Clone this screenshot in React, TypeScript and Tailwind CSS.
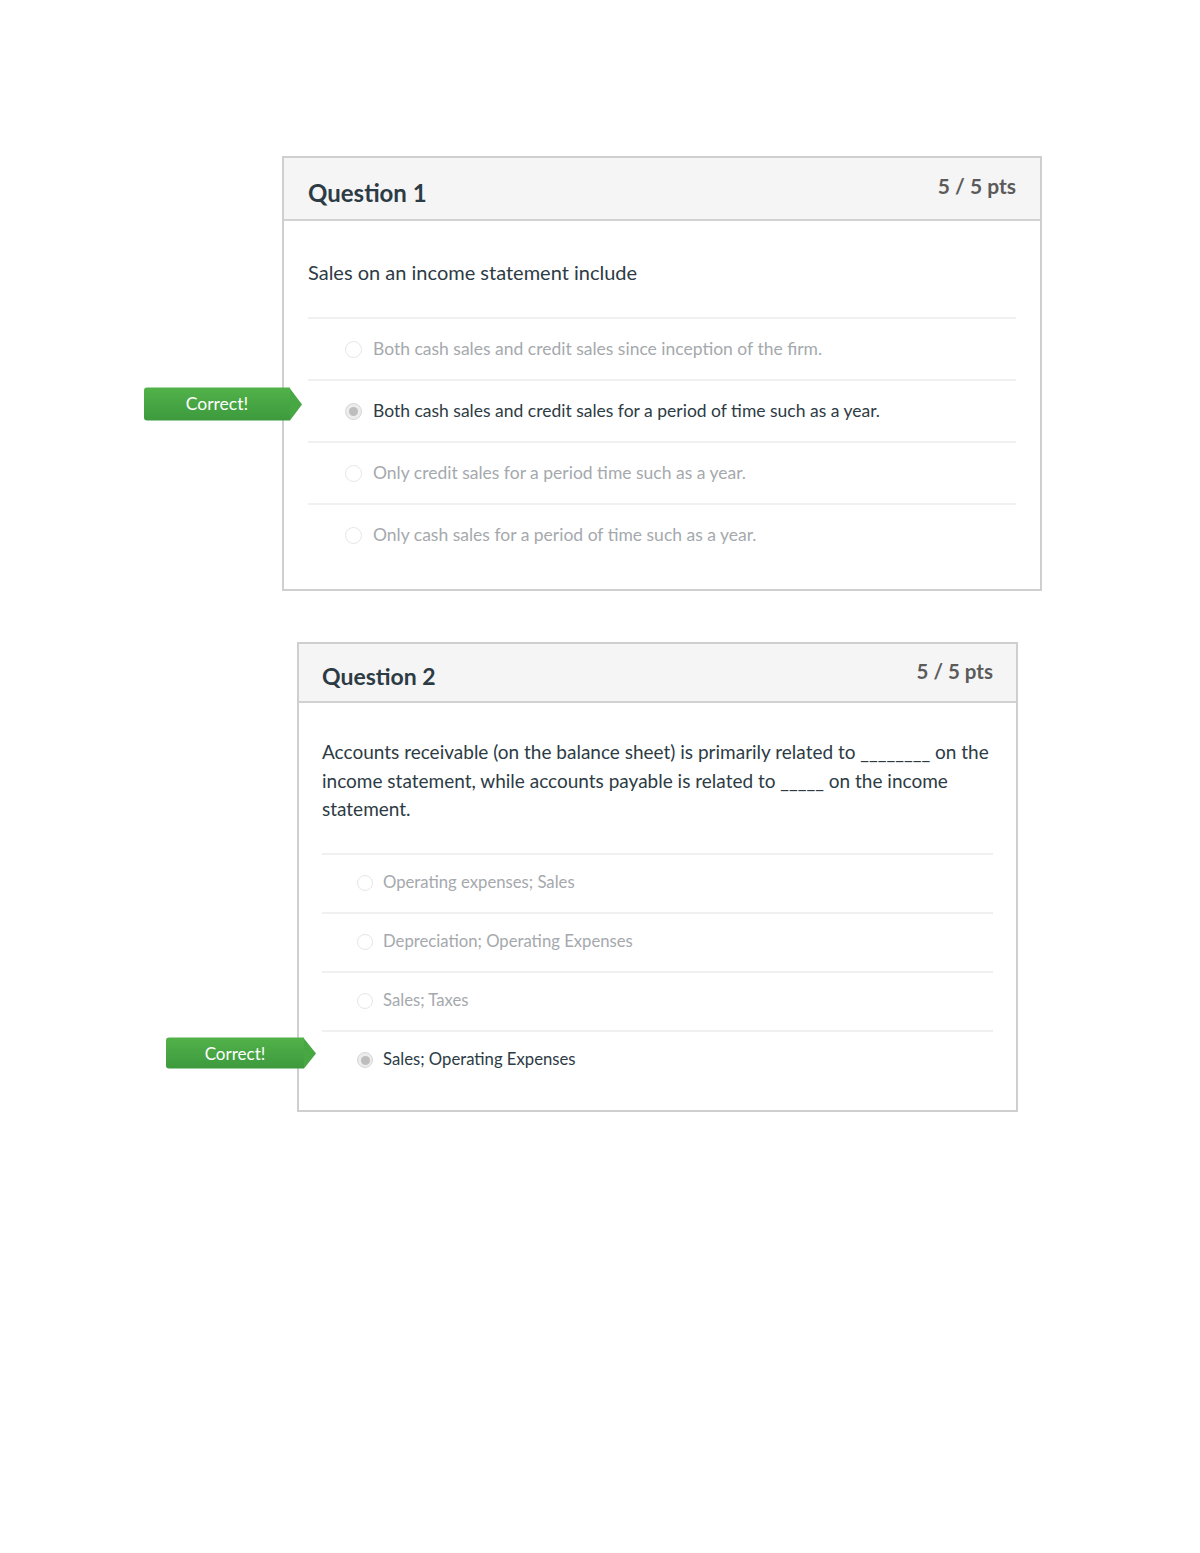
import React from "react";

type Answer = { text: string; selected?: boolean };

interface QuestionCardProps {
  title: string;
  points: string;
  question: string;
  answers: Answer[];
  compact?: boolean;
}

const Radio = ({ selected, size }: { selected?: boolean; size: string }) =>
  selected ? (
    <span className={`${size} shrink-0 rounded-full border border-[#d6d6d6] bg-[#ececec] flex items-center justify-center`}>
      <span className="w-[9px] h-[9px] rounded-full bg-[#bdbdbd]" />
    </span>
  ) : (
    <span className={`${size} shrink-0 rounded-full border border-[#e6e6e6] bg-white`} />
  );

const CorrectBadge = ({ compact }: { compact?: boolean }) => (
  <div
    className={
      compact
        ? "absolute left-[-156px] top-[calc(50%-7px)] -translate-y-1/2 flex items-center"
        : "absolute left-[-164px] top-[calc(50%-7px)] -translate-y-1/2 flex items-center"
    }
  >
    <div
      className={
        compact
          ? "w-[138px] h-[31px] rounded-l-[3px] bg-gradient-to-b from-[#52b249] to-[#3c9a3e] flex items-center justify-center text-white text-[17px]"
          : "w-[146px] h-[33px] rounded-l-[3px] bg-gradient-to-b from-[#52b249] to-[#3c9a3e] flex items-center justify-center text-white text-[17.5px]"
      }
    >
      Correct!
    </div>
    <div
      className={
        compact
          ? "w-0 h-0 border-y-[15.5px] border-y-transparent border-l-[12px] border-l-[#47a743]"
          : "w-0 h-0 border-y-[16.5px] border-y-transparent border-l-[12px] border-l-[#47a743]"
      }
    />
  </div>
);

const QuestionCard = ({ title, points, question, answers, compact }: QuestionCardProps) => (
  <div
    className={
      compact
        ? "ml-[297px] mt-[51px] w-[721px] border-2 border-[#cfcfcf] bg-white"
        : "ml-[282px] w-[760px] border-2 border-[#cfcfcf] bg-white"
    }
  >
    <div
      className={
        compact
          ? "h-[59px] bg-[#f5f5f5] border-b-2 border-[#d2d2d2] px-[23px] flex justify-between"
          : "h-[63px] bg-[#f5f5f5] border-b-2 border-[#d2d2d2] px-[24px] flex justify-between"
      }
    >
      <h2
        className={
          compact
            ? "text-[23px] font-bold text-[#2d3b45] pt-[15px]"
            : "text-[24px] font-bold text-[#2d3b45] pt-[17px]"
        }
      >
        {title}
      </h2>
      <span
        className={
          compact
            ? "text-[20.5px] font-bold text-[#5b5b5b] pt-[12px]"
            : "text-[21px] font-bold text-[#5b5b5b] pt-[12px]"
        }
      >
        {points}
      </span>
    </div>
    <div className={compact ? "px-[23px] pt-[35px] pb-[21px]" : "px-[24px] pt-[37px] pb-[24px]"}>
      <p
        className={
          compact
            ? "text-[19px] leading-[28.5px] text-[#2d3b45] pb-[29px]"
            : "text-[20px] leading-[28px] text-[#2d3b45] pb-[31px]"
        }
      >
        {question}
      </p>
      {answers.map((a) => (
        <div
          key={a.text}
          className={
            compact
              ? "relative h-[59px] border-t-2 border-[#f0f0f0] flex items-center gap-[10px] pl-[35px]"
              : "relative h-[62px] border-t-2 border-[#f0f0f0] flex items-center gap-[11px] pl-[37px]"
          }
        >
          {a.selected && <CorrectBadge compact={compact} />}
          <Radio selected={a.selected} size={compact ? "w-[16px] h-[16px]" : "w-[17px] h-[17px]"} />
          <span
            className={
              (compact ? "text-[16.7px] " : "text-[17.5px] ") +
              (a.selected ? "text-[#2d3b45]" : "text-[#a5a9ad]")
            }
          >
            {a.text}
          </span>
        </div>
      ))}
    </div>
  </div>
);

export default function App() {
  return (
    <div className="min-h-[1553px] bg-white pt-[156px] font-['Lato','Noto_Sans',sans-serif]">
      <QuestionCard
        title="Question 1"
        points="5 / 5 pts"
        question="Sales on an income statement include"
        answers={[
          { text: "Both cash sales and credit sales since inception of the firm." },
          { text: "Both cash sales and credit sales for a period of time such as a year.", selected: true },
          { text: "Only credit sales for a period time such as a year." },
          { text: "Only cash sales for a period of time such as a year." },
        ]}
      />
      <QuestionCard
        compact
        title="Question 2"
        points="5 / 5 pts"
        question="Accounts receivable (on the balance sheet) is primarily related to ________ on the income statement, while accounts payable is related to _____ on the income statement."
        answers={[
          { text: "Operating expenses; Sales" },
          { text: "Depreciation; Operating Expenses" },
          { text: "Sales; Taxes" },
          { text: "Sales; Operating Expenses", selected: true },
        ]}
      />
    </div>
  );
}
